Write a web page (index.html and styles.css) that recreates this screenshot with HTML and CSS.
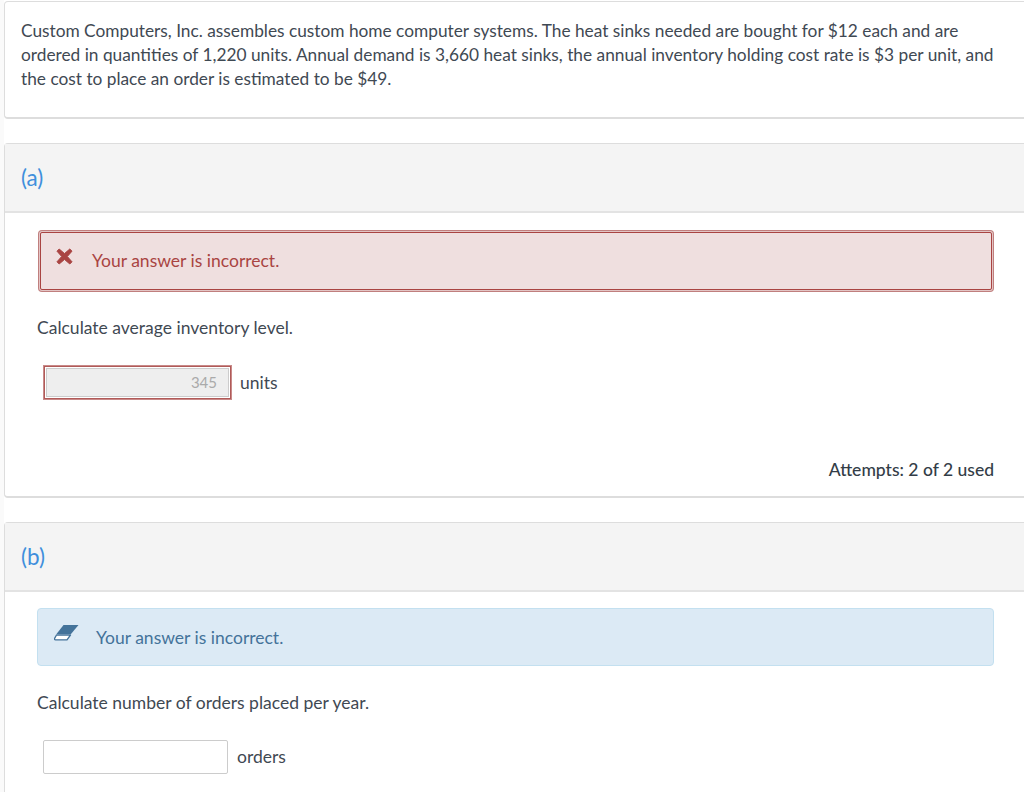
FILE: index.html
```html
<!DOCTYPE html>
<html lang="en">
<head>
    <meta charset="UTF-8">
    <title>Custom Computers, Inc.</title>
    <link rel="stylesheet" href="styles.css">
</head>
<body>
    <div class="card intro">
        <p>Custom Computers, Inc. assembles custom home computer systems. The heat sinks needed are bought for $12 each and are ordered in quantities of 1,220 units. Annual demand is 3,660 heat sinks, the annual inventory holding cost rate is $3 per unit, and the cost to place an order is estimated to be $49.</p>
    </div>

    <div class="card part part-first">
        <div class="part-header">(a)</div>
        <div class="part-body">
            <div class="alert alert-error">
                <svg class="alert-icon icon-x" width="17" height="17" viewBox="0 0 17 17">
                    <path d="M3.2 1 L8.5 5.6 L13.8 1 L16 3.2 L11.3 8.5 L16 13.8 L13.8 16 L8.5 11.4 L3.2 16 L1 13.8 L5.7 8.5 L1 3.2 Z" fill="#a94442" stroke="#a94442" stroke-linejoin="round"/>
                </svg>
                <span class="alert-text">Your answer is incorrect.</span>
            </div>
            <p class="question">Calculate average inventory level.</p>
            <div class="answer-row">
                <div class="input-box input-wrong">345</div>
                <span>units</span>
            </div>
            <div class="attempts">Attempts: 2 of 2 used</div>
        </div>
    </div>

    <div class="card part part-last">
        <div class="part-header">(b)</div>
        <div class="part-body">
            <div class="alert alert-info">
                <svg class="alert-icon icon-eraser" width="25" height="17" viewBox="0 0 25 17">
                    <path d="M9.5 1 H24.5 L17 10 H2.5 Z" fill="#44739a"/>
                    <path d="M2.5 11 H16.5 L13 15.8 H1.5 Q0 15.8 .6 14.4 Z" fill="#fff" stroke="#44739a" stroke-width="1.3" stroke-linejoin="round"/>
                </svg>
                <span class="alert-text">Your answer is incorrect.</span>
            </div>
            <p class="question">Calculate number of orders placed per year.</p>
            <div class="answer-row">
                <div class="input-box input-empty"></div>
                <span>orders</span>
            </div>
        </div>
    </div>
</body>
</html>
```

FILE: styles.css
```css
html, body {
    height: 792px;
    overflow: hidden;
}

body {
    margin: 0;
    background: linear-gradient(to right, #fafafa 4px, #fff 4px);
    font-family: 'Lato', sans-serif;
    font-size: 17.5px;
    line-height: 24px;
    color: #3f4953;
}

p {
    margin: 0;
}

.card {
    margin: 0 -6px 24px 4px;
    background: #fff;
    border: 1px solid #ddd;
    border-bottom-width: 2px;
    border-radius: 4px;
}

.intro {
    margin-top: 1px;
    height: 118px;
    box-sizing: border-box;
    padding: 17px 29px 0 16px;
    font-size: 17.3px;
}

.part-header {
    height: 67px;
    padding-left: 16px;
    background: #f4f4f4;
    border-bottom: 2px solid #e3e3e3;
    font-size: 22.5px;
    line-height: 68px;
    color: #3f8fdc;
}

.part-body {
    padding: 16px 35px 14px 32px;
}

.part-last {
    height: 290px;
    margin-bottom: 0;
}

.alert {
    display: flex;
    align-items: center;
    box-sizing: border-box;
    border-radius: 4px;
}

.alert-text {
    margin-top: 2px;
}

.alert-error {
    height: 58px;
    margin: 3px 2px 0 3px;
    color: #a94442;
    background: #efdfdf;
    border: 1px solid #a94442;
    border-radius: 2px;
    box-shadow: 0 0 0 1px #e3c5c5, 0 0 0 2px #c07f7e;
    padding: 0 0 0 15px;
}

.alert-error .alert-text {
    margin-top: 0;
}

.alert-info {
    height: 58px;
    color: #44739a;
    background: #dceaf5;
    border: 1px solid #c3e0f0;
    padding: 0 0 0 16px;
}

.alert-icon {
    flex: none;
}

.icon-x {
    margin: -9px 19px 0 0;
}

.icon-eraser {
    margin: -9px 17px 0 0;
}

.question {
    margin-top: 25px;
}

.alert-error + .question {
    margin-top: 26px;
}

.answer-row {
    display: flex;
    align-items: center;
    margin: 25px 0 0 6px;
    gap: 9px;
}

.input-box {
    box-sizing: border-box;
    text-align: right;
    font-size: 15px;
}

.input-wrong {
    width: 189px;
    height: 35px;
    margin-right: -1px;
    padding: 0 14px;
    line-height: 33px;
    color: #aaa;
    background: #eee;
    border: 1px solid #c98a89;
    box-shadow: inset 0 0 0 1px #b05a58, inset 0 0 0 2px #fff, inset 0 0 0 3px #ccc;
}

.input-empty {
    width: 185px;
    height: 34px;
    background: #fff;
    border: 1px solid #ccc;
    border-radius: 2px;
}

.attempts {
    margin-top: 58px;
    text-align: right;
    font-weight: 500;
    color: #333d47;
}
```
